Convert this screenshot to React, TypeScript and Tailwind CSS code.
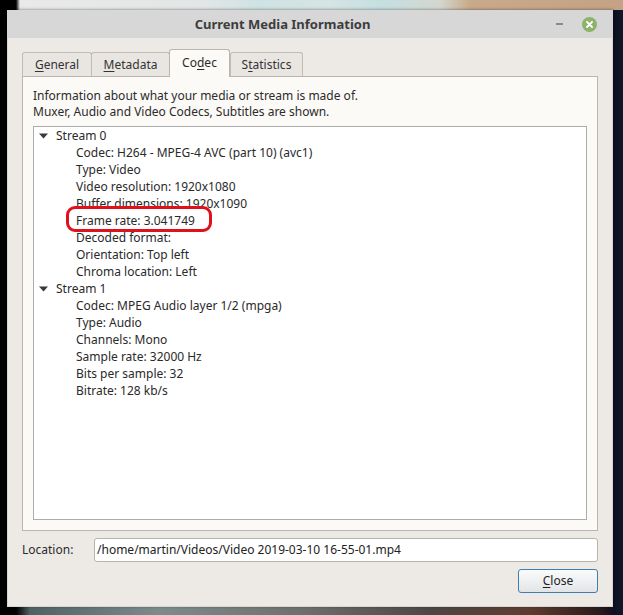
import React from "react";

const font = { fontFamily: '"Noto Sans", "Open Sans", sans-serif' };

function Tri() {
  return (
    <svg width="9" height="6" viewBox="0 0 9 6" className="shrink-0">
      <path d="M0 0.5 L9 0.5 L4.5 5.5 Z" fill="#3a3a3a" />
    </svg>
  );
}

function Tab({ children, selected, w }: { children: React.ReactNode; selected?: boolean; w: string }) {
  return (
    <div
      className={
        selected
          ? `${w} h-[28px] -mb-px z-10 bg-[#fcfaf7] border border-b-0 border-[#b9b5b1] rounded-t-[3px] flex items-center justify-center text-[#2a2a2a]`
          : `${w} h-[24px] bg-[#e9e6e2] border border-b-0 border-[#bfbbb7] rounded-t-[3px] flex items-center justify-center text-[#333] -mr-px`
      }
    >
      {children}
    </div>
  );
}

const u = (s: string) => <span className="underline underline-offset-[2px] decoration-[1px]">{s}</span>;

export default function App() {
  const s0 = [
    "Codec: H264 - MPEG-4 AVC (part 10) (avc1)",
    "Type: Video",
    "Video resolution: 1920x1080",
    "Buffer dimensions: 1920x1090",
    "Frame rate: 3.041749",
    "Decoded format:",
    "Orientation: Top left",
    "Chroma location: Left",
  ];
  const s1 = [
    "Codec: MPEG Audio layer 1/2 (mpga)",
    "Type: Audio",
    "Channels: Mono",
    "Sample rate: 32000 Hz",
    "Bits per sample: 32",
    "Bitrate: 128 kb/s",
  ];
  return (
    <div
      className="w-[623px] h-[615px] overflow-hidden flex flex-col bg-[linear-gradient(90deg,#000_0px,#000_16px,#4f6263_30px,#7d8b8b_160px,#6f7070_300px,#4d4644_430px,#5e3d30_530px,#2a1a1c_600px,#0f1020_614px,#101828_100%)] text-[12px]"
      style={font}
    >
      <div className="h-[10px] shrink-0 bg-[linear-gradient(90deg,#000_0px,#000_16px,#e9e9e9_20px,#e3e6e6_200px,#cfe2e3_260px,#d6e4e4_330px,#c5dfe1_380px,#d3d7cf_440px,#c9a98b_470px,#c3a286_100%)]" />
      <div className="flex pl-[7px]">
        <div className="w-[606px] h-[596px] flex flex-col bg-[#edeae6] shadow-[0_0_3px_rgba(0,0,0,0.5)]">
          {/* title bar */}
          <div className="h-[28px] shrink-0 bg-[#d7d7d7] flex items-center pt-[2px]">
            <div className="flex-1 text-center font-bold text-[13px] text-[#3d3d3d] pl-[2px]">Current Media Information</div>
            <div className="w-[57px] flex items-center -mt-[2px]">
              <div className="w-[7px] h-[2px] bg-[#8a8a8a]" />
              <div className="ml-[19px] w-[15px] h-[15px] rounded-full bg-[#8db26a] flex items-center justify-center">
                <svg width="7" height="7" viewBox="0 0 7 7">
                  <path d="M1 1 L6 6 M6 1 L1 6" stroke="#fff" strokeWidth="1.8" strokeLinecap="round" />
                </svg>
              </div>
            </div>
          </div>
          {/* body */}
          <div className="flex-1 flex flex-col px-[14px] pt-[11px] pb-[13px] border-x border-b border-[#d9d6d2]">
            <div className="flex items-end h-[27px] relative">
              <Tab w="w-[70px]">{u("G")}eneral</Tab>
              <Tab w="w-[79px]">{u("M")}etadata</Tab>
              <Tab w="w-[61px]" selected>
                <span className="-mt-[2px]">Co{u("d")}ec</span>
              </Tab>
              <Tab w="w-[73px]">S{u("t")}atistics</Tab>
            </div>
            <div className="h-[455px] bg-[#fcfaf7] border border-[#b9b5b1] flex flex-col px-[10px] pt-[11px] pb-[10px]">
              <div className="leading-[16px] text-[#2b2b2b]">
                <div>Information about what your media or stream is made of.</div>
                <div>Muxer, Audio and Video Codecs, Subtitles are shown.</div>
              </div>
              <div className="mt-[6px] flex-1 bg-white border border-[#acacac] text-[#2a2a2a] relative">
                <div className="flex items-center h-[17px] pl-[5px]">
                  <Tri />
                  <span className="ml-[8px]">Stream 0</span>
                </div>
                {s0.map((t) => (
                  <div key={t} className="h-[17px] flex items-center pl-[42px]">{t}</div>
                ))}
                <div className="flex items-center h-[17px] pl-[5px]">
                  <Tri />
                  <span className="ml-[8px]">Stream 1</span>
                </div>
                {s1.map((t) => (
                  <div key={t} className="h-[17px] flex items-center pl-[42px]">{t}</div>
                ))}
                <div className="absolute left-[32px] top-[79px] w-[146px] h-[26px] border-[3px] border-[#e0111b] rounded-[9px]" />
              </div>
            </div>
            <div className="mt-[7px] flex items-center h-[24px]">
              <div className="w-[72px] text-[#2b2b2b]">Location:</div>
              <div className="flex-1 h-[24px] bg-white border border-[#b7b3af] rounded-[3px] flex items-center pl-[2px] text-[#222]">
                /home/martin/Videos/Video 2019-03-10 16-55-01.mp4
              </div>
            </div>
            <div className="mt-[7px] flex justify-end">
              <div className="w-[80px] h-[24px] rounded-[3px] border border-[#3f7db3] bg-[linear-gradient(#fbfbfb,#e2e5e8)] flex items-center justify-center text-[#222]">
                {u("C")}lose
              </div>
            </div>
          </div>
        </div>
      </div>
    </div>
  );
}
